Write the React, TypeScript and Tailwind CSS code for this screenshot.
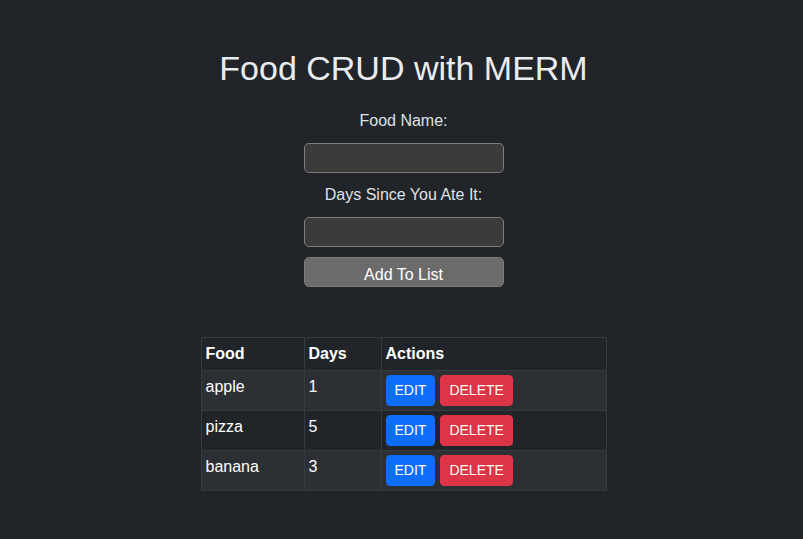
import React from 'react'

const FOODS = [
  { name: 'apple', days: 1 },
  { name: 'pizza', days: 5 },
  { name: 'banana', days: 3 },
]

export default function App() {
  return (
    <div className="min-h-[539px] bg-[#212529] font-['Liberation_Sans',Arial,sans-serif] text-[#dee2e6]">
      <div className="flex flex-col items-center pl-[4px] pt-[48px]">
        <h1 className="text-[34px] leading-[1.2] text-[#e9ecef]">Food CRUD with MERM</h1>
        <label className="mt-[20px] text-base leading-6">Food Name:</label>
        <input className="mt-[10px] h-[30px] w-[200px] rounded-[5px] border border-[#7d7d7d] bg-[#3b3b3b] px-2 text-white outline-none" />
        <label className="mt-[10px] text-base leading-6">Days Since You Ate It:</label>
        <input className="mt-[10px] h-[30px] w-[200px] rounded-[5px] border border-[#7d7d7d] bg-[#3b3b3b] px-2 text-white outline-none" />
        <button className="mt-[10px] h-[30px] w-[200px] rounded-[5px] border border-[#7d7d7d] bg-[#6b6b6b] pt-[5px] text-base text-white">
          Add To List
        </button>

        <table className="mt-[50px] w-[405px] table-fixed border-collapse text-base leading-6 text-white">
          <colgroup>
            <col className="w-[103px]" />
            <col className="w-[77px]" />
            <col className="w-[225px]" />
          </colgroup>
          <thead>
            <tr className="bg-[#212529]">
              <th className="border border-[#373b3e] p-1 text-left align-top font-bold">Food</th>
              <th className="border border-[#373b3e] p-1 text-left align-top font-bold">Days</th>
              <th className="border border-[#373b3e] p-1 text-left align-top font-bold">Actions</th>
            </tr>
          </thead>
          <tbody>
            {FOODS.map((f, i) => (
              <tr key={f.name} className={i % 2 === 0 ? 'bg-[#2c3034]' : 'bg-[#212529]'}>
                <td className="border border-[#373b3e] p-1 align-top">{f.name}</td>
                <td className="border border-[#373b3e] p-1 align-top">{f.days}</td>
                <td className="border border-[#373b3e] p-1 align-top">
                  <div className="flex gap-[5px]">
                    <button className="rounded-[4px] border border-[#0d6efd] bg-[#0d6efd] px-2 py-1 text-sm leading-[21px] text-white">
                      EDIT
                    </button>
                    <button className="rounded-[4px] border border-[#dc3545] bg-[#dc3545] px-2 py-1 text-sm leading-[21px] text-white">
                      DELETE
                    </button>
                  </div>
                </td>
              </tr>
            ))}
          </tbody>
        </table>
      </div>
    </div>
  )
}
